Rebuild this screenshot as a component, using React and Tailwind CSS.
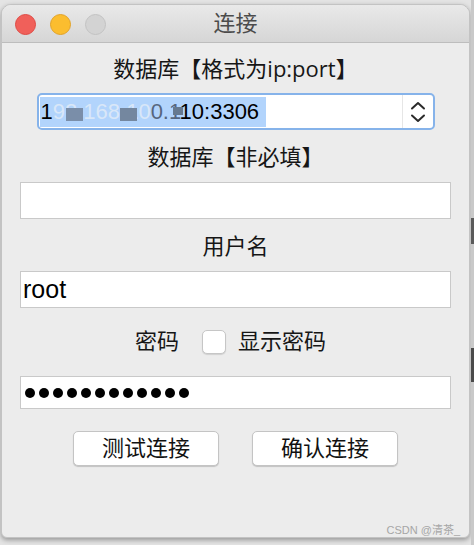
import React from 'react';

const font = { fontFamily: '"Liberation Sans", "Noto Sans CJK SC", sans-serif' };

const Light = ({ color }) => (
  <div className={`w-[21px] h-[21px] rounded-full ${color}`} />
);

const TextBox = ({ className = '', children }) => (
  <div
    className={`w-[431px] bg-white border border-[#c9c9c9] flex items-center pl-[2px] ${className}`}
  >
    {children}
  </div>
);

const Chevrons = () => (
  <svg width="16" height="22" viewBox="0 0 16 22" fill="none">
    <path d="M2 7.5 L8 2 L14 7.5" stroke="#2b2b2b" strokeWidth="2" strokeLinecap="round" strokeLinejoin="round" />
    <path d="M2 14.5 L8 20 L14 14.5" stroke="#2b2b2b" strokeWidth="2" strokeLinecap="round" strokeLinejoin="round" />
  </svg>
);

const PushButton = ({ label }) => (
  <button className="w-[146px] h-[35px] bg-white border border-[#c4c4c4] rounded-[5px] shadow-[0_1px_1px_rgba(0,0,0,0.18)] text-[22px] leading-[33px] text-[#111]">
    {label}
  </button>
);

export default function App() {
  const dots = Array.from({ length: 12 });

  return (
    <div className="w-[474px] h-[545px] bg-[#e4e4e4] flex items-start overflow-hidden" style={font}>
      {/* window */}
      <div className="mt-[4px] ml-[1px] w-[469px] h-[534px] flex flex-col bg-[#ececec] border border-[#c3c3c3] rounded-t-[10px] rounded-b-[6px] shadow-[0_2px_5px_rgba(0,0,0,0.35)] overflow-hidden">
        {/* title bar */}
        <div className="h-[38px] shrink-0 grid grid-cols-[1fr_auto_1fr] items-center bg-gradient-to-b from-[#e9e9e9] to-[#d6d6d6] border-b border-[#bdbdbd]">
          <div className="flex items-center gap-[14px] pl-[13px]">
            <Light color="bg-[#f0605a] border border-[#de4a44]" />
            <Light color="bg-[#fbbd2f] border border-[#e1a229]" />
            <Light color="bg-[#d3d3d3] border border-[#c2c2c2]" />
          </div>
          <div className="text-[22px] leading-[38px] text-[#4b4b4b]">连接</div>
          <div />
        </div>

        {/* body */}
        <div className="flex-1 flex flex-col items-center text-[#161616]">
          <div className="mt-[10px] h-[30px] text-[22px] leading-[30px]">
            数据库【格式为<span className="font-['Open_Sans']">ip:port</span>】
          </div>

          {/* combo box */}
          <div className="mt-[10px] w-[398px] h-[37px] flex items-stretch bg-white rounded-[5px] border-2 border-[#86b3ea]">
            <div className="flex-1 flex items-center pl-[1px]">
              <span className="relative h-[30px] leading-[30px] bg-[#b2d4fc] pl-[1px] pr-[7px] text-[22px] text-black">
                <span>1</span>
                <span className="text-[#d9e7f8]">92.168.10</span>
                <span className="text-[#56667e]">0.1</span>
                <span>10:3306</span>
                <span className="absolute left-[26px] top-[11px] w-[17px] h-[13px] bg-[#7a8ea9]" />
                <span className="absolute left-[80px] top-[11px] w-[17px] h-[13px] bg-[#74879f]" />
                <span className="absolute left-[133px] top-[10px] w-[10px] h-[8px] bg-[#66798f]" />
              </span>
            </div>
            <div className="w-[31px] flex items-center justify-center border-l border-[#e6e6e6]">
              <Chevrons />
            </div>
          </div>

          <div className="mt-[13px] h-[30px] text-[22px] leading-[30px]">数据库【非必填】</div>
          <TextBox className="mt-[9px] h-[37px]" />

          <div className="mt-[13px] h-[30px] text-[22px] leading-[30px]">用户名</div>
          <TextBox className="mt-[9px] h-[37px]">
            <span className="text-[25px] leading-[35px] text-black">root</span>
          </TextBox>

          {/* password row */}
          <div className="mt-[19px] h-[30px] flex items-center pr-[10px] text-[22px] leading-[30px]">
            <span>密码</span>
            <span className="ml-[23px] w-[24px] h-[24px] bg-white border border-[#c6c6c6] rounded-[5px] shadow-[0_1px_1px_rgba(0,0,0,0.12)]" />
            <span className="ml-[12px]">显示密码</span>
          </div>

          <TextBox className="mt-[19px] h-[33px]">
            <div className="flex items-center gap-[4px] pl-[2px]">
              {dots.map((_, i) => (
                <span key={i} className="w-[10px] h-[10px] rounded-full bg-black" />
              ))}
            </div>
          </TextBox>

          <div className="mt-[22px] flex gap-[33px]">
            <PushButton label="测试连接" />
            <PushButton label="确认连接" />
          </div>

          <div className="mt-auto self-end pr-[9px] h-[14px] text-[11px] leading-[14px] text-[#a6a6a6]">
            CSDN @清茶_
          </div>
        </div>
      </div>

      {/* edge of the window behind */}
      <div className="ml-[1px] w-[3px] h-[545px] bg-[#c9c9c9] flex flex-col">
        <div className="mt-[218px] h-[26px] bg-[#5a5a5a]" />
        <div className="mt-[104px] h-[34px] bg-[#4a4a4a]" />
      </div>
    </div>
  );
}
